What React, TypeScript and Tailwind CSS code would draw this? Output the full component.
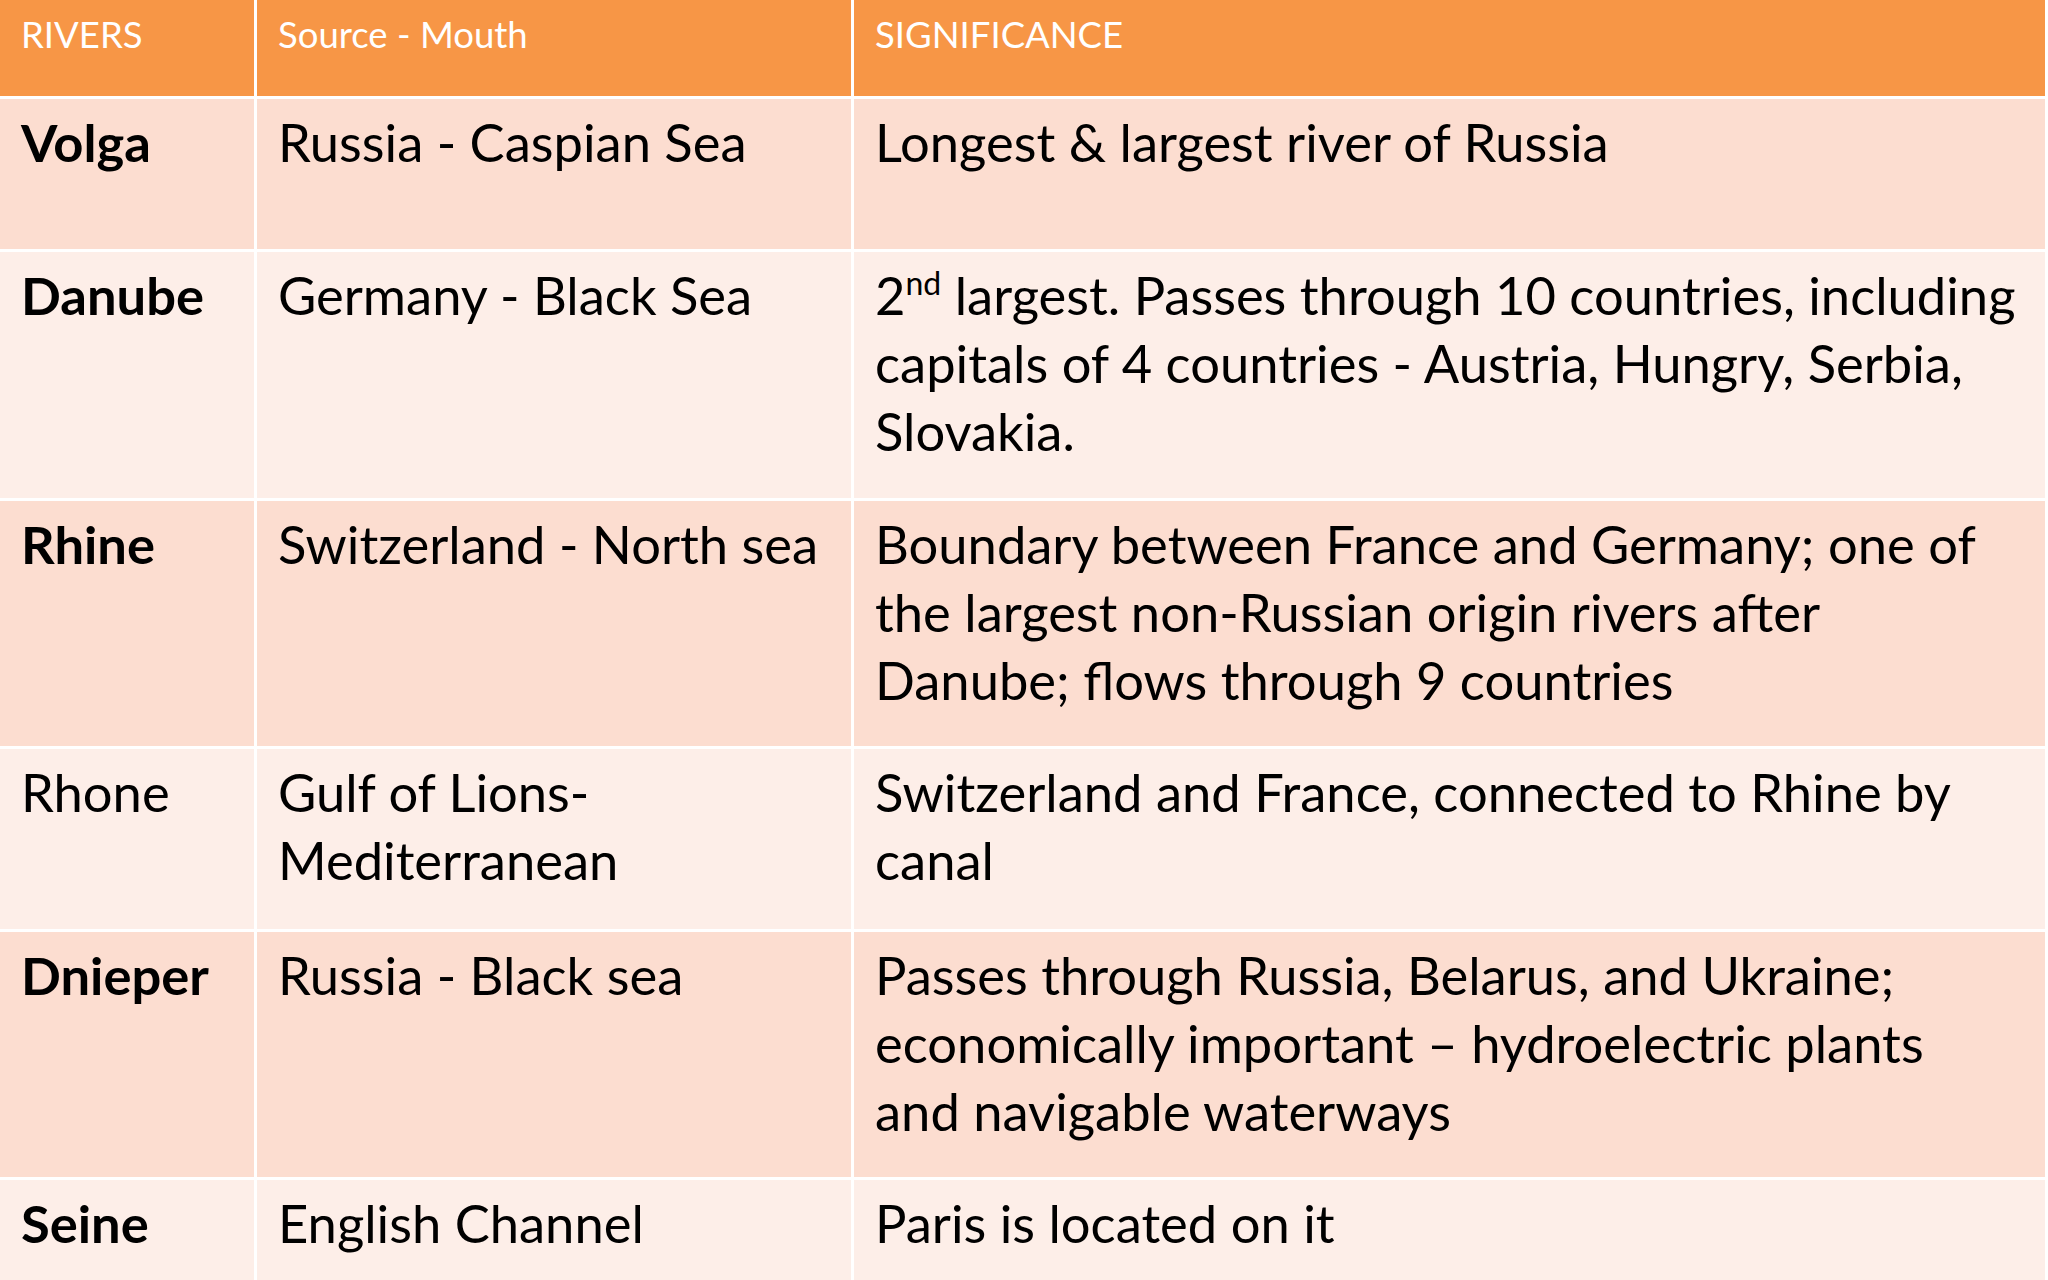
import type { ReactNode } from 'react'

interface RiverRow {
  name: string
  bold: boolean
  source: ReactNode
  significance: ReactNode
  height: string
  band: 'dark' | 'light'
}

const ROWS: RiverRow[] = [
  {
    name: 'Volga',
    bold: true,
    source: 'Russia - Caspian Sea',
    significance: 'Longest & largest river of Russia',
    height: 'h-[150px]',
    band: 'dark',
  },
  {
    name: 'Danube',
    bold: true,
    source: 'Germany - Black Sea',
    significance: (
      <>
        2<sup className="relative -top-[2px] text-[32px] align-super leading-none">nd</sup> largest. Passes through 10 countries, including
        <br />
        capitals of 4 countries - Austria, Hungry, Serbia,
        <br />
        Slovakia.
      </>
    ),
    height: 'h-[246px]',
    band: 'light',
  },
  {
    name: 'Rhine',
    bold: true,
    source: 'Switzerland - North sea',
    significance: (
      <>
        Boundary between France and Germany; one of
        <br />
        the largest non-Russian origin rivers after
        <br />
        Danube; flows through 9 countries
      </>
    ),
    height: 'h-[245px]',
    band: 'dark',
  },
  {
    name: 'Rhone',
    bold: false,
    source: (
      <>
        Gulf of Lions-
        <br />
        Mediterranean
      </>
    ),
    significance: (
      <>
        Switzerland and France, connected to Rhine by
        <br />
        canal
      </>
    ),
    height: 'h-[180px]',
    band: 'light',
  },
  {
    name: 'Dnieper',
    bold: true,
    source: 'Russia - Black sea',
    significance: (
      <>
        Passes through Russia, Belarus, and Ukraine;
        <br />
        economically important – hydroelectric plants
        <br />
        and navigable waterways
      </>
    ),
    height: 'h-[245px]',
    band: 'dark',
  },
  {
    name: 'Seine',
    bold: true,
    source: 'English Channel',
    significance: 'Paris is located on it',
    height: 'flex-1',
    band: 'light',
  },
]

function Cell({ className, children }: { className: string; children: ReactNode }) {
  return <div className={`whitespace-nowrap px-[21px] pt-[9px] ${className}`}>{children}</div>
}

export default function App() {
  return (
    <div
      className="flex h-[1280px] w-[2048px] flex-col gap-[3px] overflow-hidden bg-white pr-[3px] text-black"
      style={{ fontFamily: 'Lato, "Open Sans", sans-serif' }}
    >
      <div className="flex h-[96px] shrink-0 gap-[3px] text-[36.5px] leading-[68px] text-white">
        <div className="w-[254px] shrink-0 bg-[#f79646] px-[21px]">RIVERS</div>
        <div className="w-[594px] shrink-0 bg-[#f79646] px-[21px]">Source - Mouth</div>
        <div className="flex-1 bg-[#f79646] px-[21px]">SIGNIFICANCE</div>
      </div>

      {ROWS.map((row) => {
        const bg = row.band === 'dark' ? 'bg-[#fcddd0]' : 'bg-[#fdeee8]'
        return (
          <div key={row.name} className={`flex shrink-0 gap-[3px] text-[52.5px] leading-[68px] ${row.height}`}>
            <Cell className={`w-[254px] shrink-0 ${bg} ${row.bold ? 'font-bold' : ''}`}>{row.name}</Cell>
            <Cell className={`w-[594px] shrink-0 ${bg}`}>{row.source}</Cell>
            <Cell className={`flex-1 ${bg}`}>{row.significance}</Cell>
          </div>
        )
      })}
    </div>
  )
}
